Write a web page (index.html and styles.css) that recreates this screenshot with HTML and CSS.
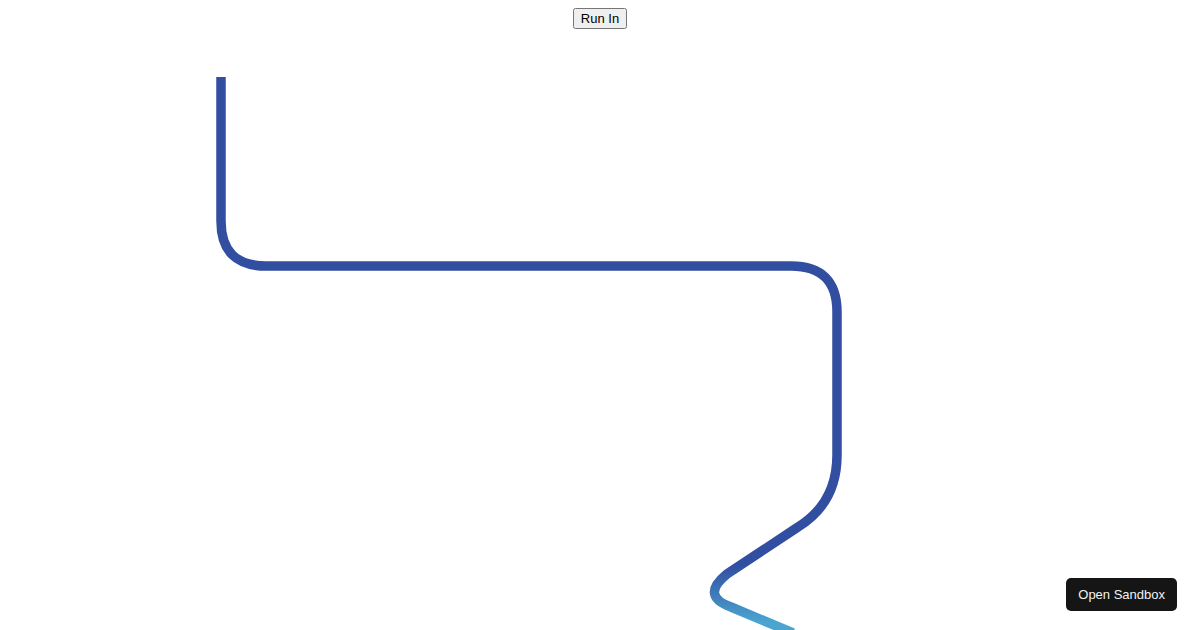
FILE: index.html
```html
<!DOCTYPE html>
<html>
<head>
<meta charset="utf-8">
<link rel="stylesheet" href="styles.css">
</head>
<body>
<div class="toolbar"><button class="run-btn">Run In</button></div>
<svg class="canvas" width="1200" height="630" viewBox="0 0 1200 630">
  <defs>
    <linearGradient id="trail" gradientUnits="userSpaceOnUse" x1="0" y1="565" x2="0" y2="622">
      <stop offset="0" stop-color="#324ea0"/>
      <stop offset="1" stop-color="#4aa5d0"/>
    </linearGradient>
  </defs>
  <path class="trail" d="M221 77 V221 Q221 266 266 266 H791 Q837 266 837 312 V455 Q837 503 798 527 L727 574 Q700 596 731 607 L793 633" stroke="url(#trail)"/>
</svg>
<button class="sandbox-btn">Open Sandbox</button>
</body>
</html>
```
FILE: styles.css
```css
html, body {
  margin: 0;
  padding: 0;
  background: #ffffff;
  overflow: hidden;
}
body {
  width: 1200px;
  height: 630px;
  position: relative;
  font-family: "Liberation Sans", Arial, sans-serif;
}
.toolbar {
  padding-top: 8px;
  text-align: center;
  position: relative;
  z-index: 1;
}
.run-btn {
  font-family: "Liberation Sans", Arial, sans-serif;
  font-size: 13px;
  padding: 1px 6px;
}
.canvas {
  position: absolute;
  top: 0;
  left: 0;
  pointer-events: none;
}
.trail {
  fill: none;
  stroke-width: 9.5;
  stroke-linecap: butt;
  stroke-linejoin: round;
}
.sandbox-btn {
  position: fixed;
  right: 23px;
  bottom: 19px;
  height: 33px;
  padding: 0 12px;
  background: #151515;
  color: #f2f2f2;
  border: none;
  border-radius: 5px;
  font-family: "Liberation Sans", Arial, sans-serif;
  font-size: 13px;
}
```
